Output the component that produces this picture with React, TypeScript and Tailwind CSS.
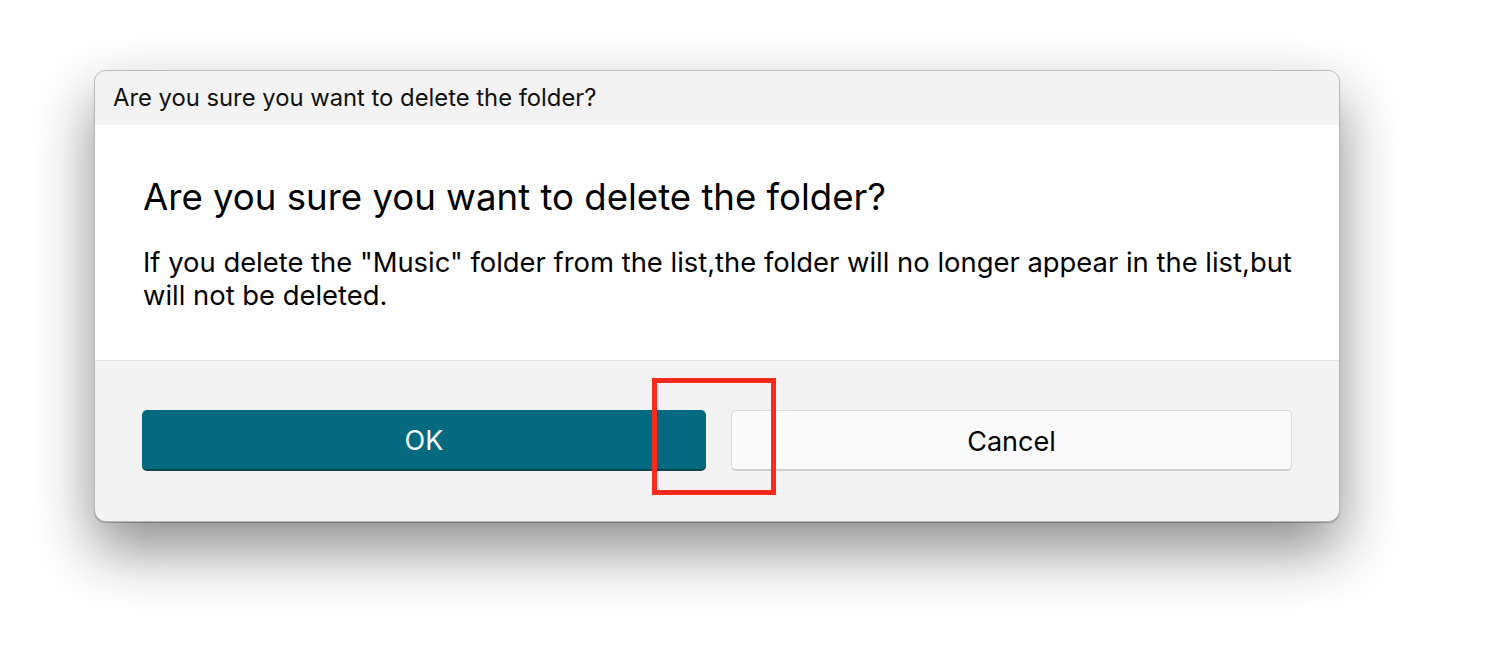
import React from "react";

const font = { fontFamily: "Inter, 'Noto Sans', sans-serif" };

export default function App() {
  return (
    <div className="w-[1488px] h-[646px] bg-white pt-[70px] pl-[94px] relative" style={font}>
      <div className="w-[1246px] h-[452px] rounded-[12px] border border-[#b9b9b9] bg-[#f3f3f3] overflow-hidden flex flex-col shadow-[0_1px_1px_rgba(0,0,0,0.25),0_28px_60px_rgba(0,0,0,0.45)]">
        <div className="h-[54px] shrink-0 flex items-center px-[18px] text-[23.8px] text-[#111] bg-[#f3f3f3]">
          Are you sure you want to delete the folder?
        </div>
        <div className="h-[236px] shrink-0 bg-white border-b border-[#e3e3e3] pl-[48px] pr-[36px] pt-[50px]">
          <h1 className="text-[36.6px] leading-[44px] text-black">Are you sure you want to delete the folder?</h1>
          <p className="mt-[27px] text-[27.4px] leading-[33px] text-black">
            If you delete the "Music" folder from the list,the folder will no longer appear in the list,but will not be deleted.
          </p>
        </div>
        <div className="flex-1 flex gap-[25px] px-[47px] pt-[49px]">
          <button className="w-[564px] h-[61px] pt-[4px] rounded-[5px] bg-[#036a80] border-b-2 border-[#0a4552] text-white text-[27px]">
            OK
          </button>
          <button className="flex-1 h-[61px] pt-[4px] rounded-[5px] bg-[#fafafa] border border-[#dadada] border-b-2 border-b-[#cfcfcf] text-black text-[27px]">
            Cancel
          </button>
        </div>
      </div>
      <div className="absolute left-[652px] top-[378px] w-[124px] h-[117px] border-[5px] border-[#fb2a1c]" />
    </div>
  );
}
